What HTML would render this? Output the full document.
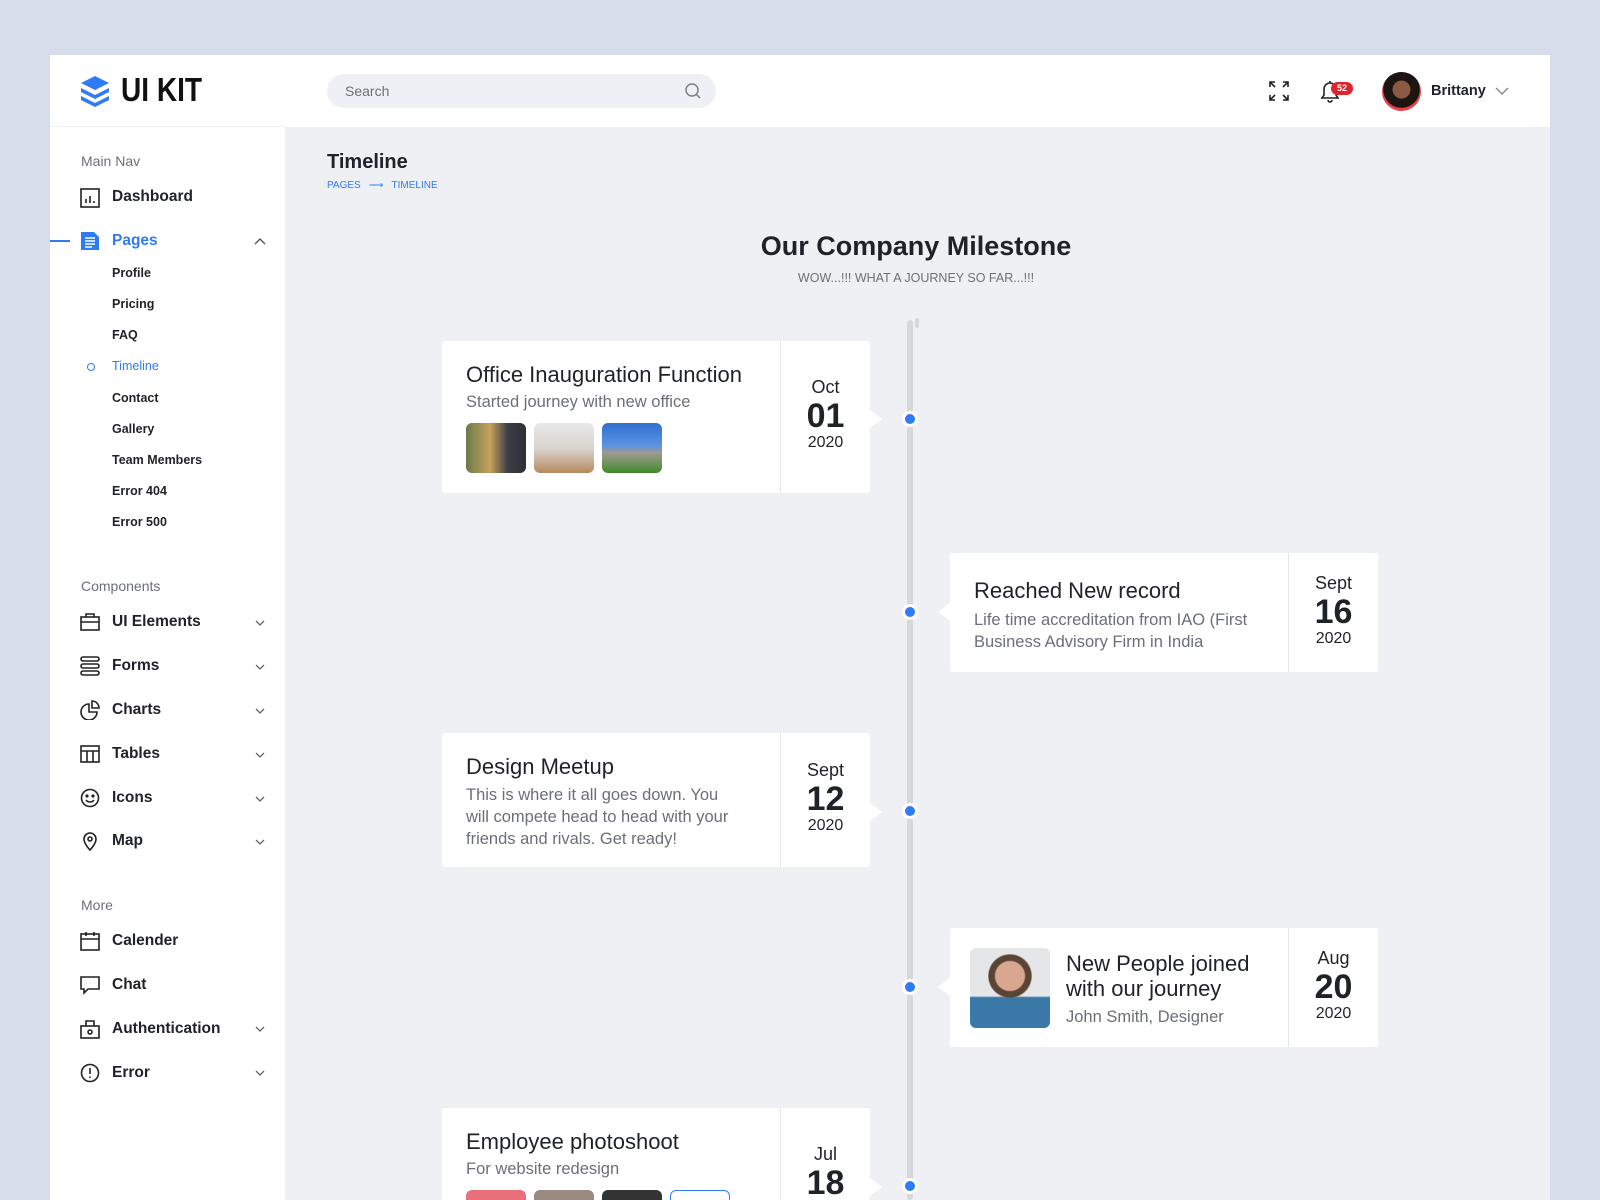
<!DOCTYPE html><html><head><meta charset="utf-8"><style>
*{box-sizing:border-box;margin:0;padding:0}
html,body{width:1600px;height:1200px;overflow:hidden}
body{background:#d8ddeb;font-family:"Liberation Sans",sans-serif;position:relative;color:#1f2229}
#wrap{position:absolute;left:0;top:0;width:1600px;height:1200px;overflow:hidden}
.a{position:absolute}
#panel{left:50px;top:55px;width:1500px;height:1145px;background:#eff0f4}
#side{left:50px;top:55px;width:235px;height:1145px;background:#fff}
#head{left:285px;top:55px;width:1265px;height:72px;background:#fff}
.sec{font-size:14px;color:#6b6f78;left:81px}
.it{left:112px;font-size:15.5px;font-weight:bold;color:#1f2229;top:0}
.sub{left:112px;font-size:12.5px;font-weight:bold;color:#1f2229}
.ic{left:80px;width:20px;height:20px}
.chev{left:254px;width:12px;height:8px}
.card{background:#fff;border-radius:3px}
.date{position:absolute;top:0;bottom:0;width:90px;border-left:1px solid #e4e6ea;text-align:center}
.date .m{font-size:18px;color:#1f2229}
.date .d{font-size:34px;font-weight:bold;line-height:36px;color:#1f2229}
.date .y{font-size:16px;color:#1f2229}
.t{font-size:22px;color:#1f2229}
.s{font-size:16.5px;color:#6b6f78;line-height:22px}
.dot{width:16px;height:16px;border-radius:50%;background:#2f7bf5;border:3px solid #fff;left:902px}
.arrL{width:0;height:0;border-top:9px solid transparent;border-bottom:9px solid transparent;border-left:12px solid #fff}
.arrR{width:0;height:0;border-top:9px solid transparent;border-bottom:9px solid transparent;border-right:12px solid #fff}
.ph{width:60px;height:50px;border-radius:6px}
</style></head><body><div id="wrap">
<div class="a" id="panel"></div>
<div class="a" id="side"></div>
<div class="a" style="left:50px;top:126px;width:235px;height:1px;background:#eef0f3"></div>
<div class="a" id="head"></div>
<svg class="a" style="left:80px;top:75px" width="30" height="32" viewBox="0 0 30 32"><path d="M15 1L29 8 15 15 1 8z" fill="#2f7bf5"/><path d="M1 13l14 7 14-7v4L15 24 1 17z" fill="#2f7bf5"/><path d="M1 21l14 7 14-7v4L15 32 1 25z" fill="#2f7bf5"/></svg>
<div class="a" style="left:121px;top:71px;font-size:33px;font-weight:bold;transform:scaleX(.85);transform-origin:left;color:#111">UI KIT</div>
<div class="a" style="left:327px;top:74px;width:389px;height:34px;border-radius:17px;background:#eef0f5"></div>
<div class="a" style="left:345px;top:83px;font-size:14px;color:#6b6f78">Search</div>
<svg class="a" style="left:684px;top:82px" width="18" height="18" viewBox="0 0 18 18"><circle cx="8" cy="8" r="6" fill="none" stroke="#7a7f8a" stroke-width="1.5"/><path d="M12.5 12.5L16 16" stroke="#7a7f8a" stroke-width="1.5"/></svg>
<svg class="a" style="left:1268px;top:80px" width="22" height="22" viewBox="0 0 22 22" fill="none" stroke="#222" stroke-width="1.6"><path d="M2 7V2h5M2 2l5 5M20 7V2h-5M20 2l-5 5M2 15v5h5M2 20l5-5M20 15v5h-5M20 20l-5-5"/></svg>
<svg class="a" style="left:1318px;top:78px" width="24" height="26" viewBox="0 0 24 26" fill="none" stroke="#222" stroke-width="1.6"><path d="M4 20h16l-2-3v-6a6 6 0 0 0-12 0v6z M10 22a2 2 0 0 0 4 0 M12 3v2"/></svg>
<div class="a" style="left:1331px;top:82px;width:22px;height:13px;border-radius:7px;background:#e0242c;color:#fff;font-size:9px;font-weight:bold;text-align:center;line-height:13px">52</div>
<div class="a" style="left:1382px;top:72px;width:39px;height:39px;border-radius:50%;background:radial-gradient(circle at 50% 45%,#8a5a42 0 30%,#1c1511 32% 62%,#e7414a 64%)"></div>
<div class="a" style="left:1431px;top:83px;font-size:14.5px;font-weight:bold;color:#1f2229">Brittany</div>
<svg class="a" style="left:1495px;top:87px" width="14" height="9" viewBox="0 0 14 9"><path d="M1 1l6 6 6-6" fill="none" stroke="#888" stroke-width="1.4"/></svg>
<div class="a sec" style="top:153px">Main Nav</div>
<svg class="a ic" style="top:188px" viewBox="0 0 20 20" fill="none" stroke="#222" stroke-width="1.6"><rect x="1" y="1" width="18" height="18"/><path d="M6 15v-4M10 15V8M14 15v-2"/></svg>
<div class="a it" style="top:188px">Dashboard</div>
<div class="a" style="left:50px;top:240px;width:20px;height:2px;background:#2f7bf5"></div>
<svg class="a ic" style="top:231px" viewBox="0 0 20 20"><path d="M1 1h13l5 5v13H1z" fill="#2f7bf5"/><path d="M5 7h10M5 10h10M5 13h10M5 16h7" stroke="#fff" stroke-width="1.4"/></svg>
<div class="a it" style="top:232px;color:#2f7bf5">Pages</div>
<svg class="a chev" style="top:237px" viewBox="0 0 12 8"><path d="M1 7l5-5 5 5" fill="none" stroke="#555" stroke-width="1.4"/></svg>
<div class="a sub" style="top:266px">Profile</div>
<div class="a sub" style="top:297px">Pricing</div>
<div class="a sub" style="top:328px">FAQ</div>
<div class="a" style="left:87px;top:363px;width:8px;height:8px;border-radius:50%;border:1.5px solid #2f7bf5"></div>
<div class="a sub" style="top:359px;color:#2f7bf5;font-weight:normal">Timeline</div>
<div class="a sub" style="top:391px">Contact</div>
<div class="a sub" style="top:422px">Gallery</div>
<div class="a sub" style="top:453px">Team Members</div>
<div class="a sub" style="top:484px">Error 404</div>
<div class="a sub" style="top:515px">Error 500</div>
<div class="a sec" style="top:578px">Components</div>
<svg class="a ic" style="top:612px" viewBox="0 0 20 20" fill="none" stroke="#222" stroke-width="1.6"><rect x="1" y="5" width="18" height="13"/><path d="M6 5V2h8v3M1 10h18"/></svg>
<div class="a it" style="top:613px">UI Elements</div>
<svg class="a ic" style="top:656px" viewBox="0 0 20 20" fill="none" stroke="#222" stroke-width="1.6"><rect x="1" y="1" width="18" height="4" rx="2"/><rect x="1" y="8" width="18" height="4" rx="2"/><rect x="1" y="15" width="18" height="4" rx="2"/></svg>
<div class="a it" style="top:657px">Forms</div>
<svg class="a ic" style="top:700px" viewBox="0 0 20 20" fill="none" stroke="#222" stroke-width="1.6"><path d="M9 4a8 8 0 1 0 8 8H9z"/><path d="M12 1v7h7a7 7 0 0 0-7-7z"/></svg>
<div class="a it" style="top:701px">Charts</div>
<svg class="a ic" style="top:744px" viewBox="0 0 20 20" fill="none" stroke="#222" stroke-width="1.6"><rect x="1" y="2" width="18" height="16"/><path d="M1 7h18M7 7v11M13 7v11"/></svg>
<div class="a it" style="top:745px">Tables</div>
<svg class="a ic" style="top:788px" viewBox="0 0 20 20" fill="none" stroke="#222" stroke-width="1.6"><circle cx="10" cy="10" r="8.5"/><path d="M6 12a5 5 0 0 0 8 0"/><circle cx="7" cy="8" r=".8" fill="#222"/><circle cx="13" cy="8" r=".8" fill="#222"/></svg>
<div class="a it" style="top:789px">Icons</div>
<svg class="a ic" style="top:831px" viewBox="0 0 20 20" fill="none" stroke="#222" stroke-width="1.6"><path d="M10 19s-6-6-6-11a6 6 0 0 1 12 0c0 5-6 11-6 11z"/><circle cx="10" cy="8" r="2"/></svg>
<div class="a it" style="top:832px">Map</div>
<svg class="a chev" style="top:619px" viewBox="0 0 12 8"><path d="M2 2l4 4 4-4" fill="none" stroke="#666" stroke-width="1.3"/></svg>
<svg class="a chev" style="top:663px" viewBox="0 0 12 8"><path d="M2 2l4 4 4-4" fill="none" stroke="#666" stroke-width="1.3"/></svg>
<svg class="a chev" style="top:707px" viewBox="0 0 12 8"><path d="M2 2l4 4 4-4" fill="none" stroke="#666" stroke-width="1.3"/></svg>
<svg class="a chev" style="top:751px" viewBox="0 0 12 8"><path d="M2 2l4 4 4-4" fill="none" stroke="#666" stroke-width="1.3"/></svg>
<svg class="a chev" style="top:795px" viewBox="0 0 12 8"><path d="M2 2l4 4 4-4" fill="none" stroke="#666" stroke-width="1.3"/></svg>
<svg class="a chev" style="top:838px" viewBox="0 0 12 8"><path d="M2 2l4 4 4-4" fill="none" stroke="#666" stroke-width="1.3"/></svg>
<div class="a sec" style="top:897px">More</div>
<svg class="a ic" style="top:931px" viewBox="0 0 20 20" fill="none" stroke="#222" stroke-width="1.6"><rect x="1" y="3" width="18" height="16"/><path d="M1 8h18M6 1v4M14 1v4"/></svg>
<div class="a it" style="top:932px">Calender</div>
<svg class="a ic" style="top:975px" viewBox="0 0 20 20" fill="none" stroke="#222" stroke-width="1.6"><path d="M1 2h18v12H8l-4 4v-4H1z"/><path d="M6 8h.1M10 8h.1M14 8h.1" stroke-width="2"/></svg>
<div class="a it" style="top:976px">Chat</div>
<svg class="a ic" style="top:1019px" viewBox="0 0 20 20" fill="none" stroke="#222" stroke-width="1.6"><rect x="1" y="7" width="18" height="12"/><path d="M6 7V2h8v5"/><circle cx="10" cy="13" r="2"/></svg>
<div class="a it" style="top:1020px">Authentication</div>
<svg class="a ic" style="top:1063px" viewBox="0 0 20 20" fill="none" stroke="#222" stroke-width="1.6"><circle cx="10" cy="10" r="8.5"/><path d="M10 5v6M10 13.5v1.5"/></svg>
<div class="a it" style="top:1064px">Error</div>
<svg class="a chev" style="top:1025px" viewBox="0 0 12 8"><path d="M2 2l4 4 4-4" fill="none" stroke="#666" stroke-width="1.3"/></svg>
<svg class="a chev" style="top:1069px" viewBox="0 0 12 8"><path d="M2 2l4 4 4-4" fill="none" stroke="#666" stroke-width="1.3"/></svg>
<div class="a" style="left:327px;top:151px;font-size:20px;font-weight:bold">Timeline</div>
<div class="a" style="left:327px;top:180px;font-size:10px;color:#2f7bf5">PAGES &nbsp;&nbsp;⟶&nbsp;&nbsp; TIMELINE</div>
<div class="a" style="left:616px;width:600px;text-align:center;top:231px;font-size:27px;font-weight:bold">Our Company Milestone</div>
<div class="a" style="left:616px;width:600px;text-align:center;top:271px;font-size:12.5px;color:#6b6f78">WOW...!!! WHAT A JOURNEY SO FAR...!!!</div>
<div class="a" style="left:907px;top:320px;width:6px;height:880px;background:#d6d8de;border-radius:3px"></div>
<div class="a" style="left:915px;top:318px;width:4px;height:10px;background:#d6d8de;border-radius:2px"></div>
<div class="a card" style="left:442px;top:341px;width:428px;height:152px">
 <div class="a t" style="left:24px;top:21px">Office Inauguration Function</div>
 <div class="a s" style="left:24px;top:50px">Started journey with new office</div>
 <div class="a ph" style="left:24px;top:82px;background:linear-gradient(90deg,#6a7a4a,#c7a15a 40%,#3b3d45 70%,#2d2f38)"></div>
 <div class="a ph" style="left:92px;top:82px;background:linear-gradient(180deg,#e8e8e8,#d9d4cf 50%,#b78a5e)"></div>
 <div class="a ph" style="left:160px;top:82px;background:linear-gradient(180deg,#2f6fd2,#5b93e0 45%,#a09a90 60%,#3f8a2a)"></div>
 <div class="date" style="left:338px;padding-top:36px"><div class="m">Oct</div><div class="d">01</div><div class="y">2020</div></div>
</div>
<div class="a arrL" style="left:870px;top:410px"></div>
<div class="a dot" style="top:411px"></div>
<div class="a card" style="left:950px;top:553px;width:428px;height:119px">
 <div class="a t" style="left:24px;top:25px">Reached New record</div>
 <div class="a s" style="left:24px;top:56px;width:295px">Life time accreditation from IAO (First Business Advisory Firm in India</div>
 <div class="date" style="left:338px;padding-top:20px"><div class="m">Sept</div><div class="d">16</div><div class="y">2020</div></div>
</div>
<div class="a arrR" style="left:938px;top:603px"></div>
<div class="a dot" style="top:604px"></div>
<div class="a card" style="left:442px;top:733px;width:428px;height:134px">
 <div class="a t" style="left:24px;top:21px">Design Meetup</div>
 <div class="a s" style="left:24px;top:51px;width:275px">This is where it all goes down. You will compete head to head with your friends and rivals. Get ready!</div>
 <div class="date" style="left:338px;padding-top:27px"><div class="m">Sept</div><div class="d">12</div><div class="y">2020</div></div>
</div>
<div class="a arrL" style="left:870px;top:803px"></div>
<div class="a dot" style="top:803px"></div>
<div class="a card" style="left:950px;top:928px;width:428px;height:119px">
 <div class="a" style="left:20px;top:20px;width:80px;height:80px;border-radius:6px;background:radial-gradient(circle at 50% 35%,#d9a78f 0 22%,#5a4535 24% 32%,transparent 34%),linear-gradient(180deg,#e4e6e8 60%,#3a78a8 62%)"></div>
 <div class="a t" style="left:116px;top:23px;line-height:25px">New People joined<br>with our journey</div>
 <div class="a s" style="left:116px;top:78px">John Smith, Designer</div>
 <div class="date" style="left:338px;padding-top:20px"><div class="m">Aug</div><div class="d">20</div><div class="y">2020</div></div>
</div>
<div class="a arrR" style="left:938px;top:978px"></div>
<div class="a dot" style="top:979px"></div>
<div class="a card" style="left:442px;top:1108px;width:428px;height:120px">
 <div class="a t" style="left:24px;top:21px">Employee photoshoot</div>
 <div class="a s" style="left:24px;top:50px">For website redesign</div>
 <div class="a ph" style="left:24px;top:82px;background:#e9707a"></div>
 <div class="a ph" style="left:92px;top:82px;background:#9a8a80"></div>
 <div class="a ph" style="left:160px;top:82px;background:#333"></div>
 <div class="a ph" style="left:228px;top:82px;border:1px solid #2f7bf5;background:#fff"></div>
 <div class="date" style="left:338px;padding-top:36px"><div class="m">Jul</div><div class="d">18</div></div>
</div>
<div class="a arrL" style="left:870px;top:1178px"></div>
<div class="a dot" style="top:1178px"></div>
</div></body></html>
